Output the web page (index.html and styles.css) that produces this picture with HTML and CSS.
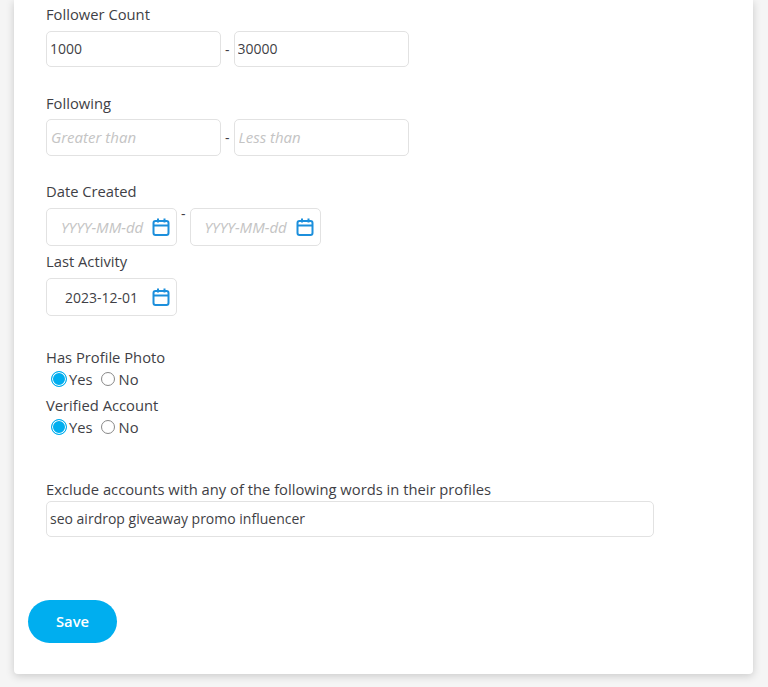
FILE: index.html

```html
<!DOCTYPE html>
<html>
<head>
    <title>Filters</title>
    <link rel="stylesheet" href="styles.css">
</head>
<body>
    <div class="card">
        <form class="filters">
            <div class="field field-follower">
                <label class="field-label">Follower Count</label>
                <div class="range">
                    <input type="text" class="text-input filled" value="1000">
                    <span class="dash">-</span>
                    <input type="text" class="text-input filled" value="30000">
                </div>
            </div>

            <div class="field field-following">
                <label class="field-label">Following</label>
                <div class="range">
                    <input type="text" class="text-input" placeholder="Greater than">
                    <span class="dash">-</span>
                    <input type="text" class="text-input" placeholder="Less than">
                </div>
            </div>

            <div class="field field-created">
                <label class="field-label">Date Created</label>
                <div class="range">
                    <div class="date-input">
                        <input type="text" placeholder="YYYY-MM-dd">
                        <svg class="cal-icon" viewBox="0 0 18 18"><rect x="1.5" y="3" width="15" height="14" rx="2"/><path d="M1.5 7.5h15M6 0.5v4M12.5 0.5v4"/></svg>
                    </div>
                    <span class="dash dash-top">-</span>
                    <div class="date-input">
                        <input type="text" placeholder="YYYY-MM-dd">
                        <svg class="cal-icon" viewBox="0 0 18 18"><rect x="1.5" y="3" width="15" height="14" rx="2"/><path d="M1.5 7.5h15M6 0.5v4M12.5 0.5v4"/></svg>
                    </div>
                </div>
            </div>

            <div class="field field-activity">
                <label class="field-label">Last Activity</label>
                <div class="date-input">
                    <input type="text" class="date-filled" value="2023-12-01">
                    <svg class="cal-icon" viewBox="0 0 18 18"><rect x="1.5" y="3" width="15" height="14" rx="2"/><path d="M1.5 7.5h15M6 0.5v4M12.5 0.5v4"/></svg>
                </div>
            </div>

            <div class="field field-photo">
                <label class="field-label">Has Profile Photo</label>
                <div class="radios">
                    <label class="radio"><input type="radio" name="photo" checked>Yes</label>
                    <label class="radio"><input type="radio" name="photo">No</label>
                </div>
            </div>

            <div class="field field-verified">
                <label class="field-label">Verified Account</label>
                <div class="radios">
                    <label class="radio"><input type="radio" name="verified" checked>Yes</label>
                    <label class="radio"><input type="radio" name="verified">No</label>
                </div>
            </div>

            <div class="field field-exclude">
                <label class="field-label">Exclude accounts with any of the following words in their profiles</label>
                <input type="text" class="text-input filled wide-input" value="seo airdrop giveaway promo influencer">
            </div>
        </form>

        <button type="button" class="save-button">Save</button>
    </div>
</body>
</html>
```

FILE: styles.css

```css
* {
    box-sizing: border-box;
}
body {
    margin: 0;
    padding: 0 15px 13px 14px;
    background-color: #f5f5f5;
    font-family: "Open Sans", sans-serif;
    font-size: 14px;
    color: #3f3f46;
}
.card {
    background-color: #fff;
    border-radius: 0 0 4px 4px;
    box-shadow: 0 2px 8px rgba(0, 0, 0, 0.18);
    padding: 5px 14px 31px;
}
.filters {
    padding-left: 18px;
}
.field-label {
    display: block;
    padding-bottom: 2px;
    font-size: 14.75px;
    line-height: 18px;
}
.range {
    display: flex;
    align-items: center;
}
.text-input {
    width: 175px;
    height: 36px;
    padding: 0 4px;
    background-color: #fff;
    border: 1px solid #e2e2e2;
    border-radius: 5px;
    font-family: inherit;
    font-size: 14px;
    color: #3f3f46;
    outline: none;
}
.text-input.filled {
    padding: 0 3px 2px;
}
input::placeholder {
    color: #c4c4c4;
    font-size: 15px;
    font-style: italic;
    opacity: 1;
}
.dash {
    width: 12.5px;
    text-align: center;
}
.dash-top {
    align-self: flex-start;
    line-height: 12px;
}
.date-input {
    display: flex;
    align-items: center;
    width: 131px;
    height: 38px;
    background-color: #fff;
    border: 1px solid #e2e2e2;
    border-radius: 5px;
}
.date-input input {
    flex: 1;
    min-width: 0;
    height: 100%;
    padding: 0 0 0 14px;
    border: none;
    background: none;
    font-family: inherit;
    font-size: 14px;
    color: #3f3f46;
    outline: none;
}
.date-input input.date-filled {
    padding-left: 18px;
}
.cal-icon {
    flex: none;
    width: 18px;
    height: 18px;
    margin-right: 6px;
    fill: none;
    stroke: #1c8fdc;
    stroke-width: 2;
}
.radios {
    display: flex;
    align-items: center;
    height: 22px;
    padding-left: 5px;
    font-size: 14.75px;
}
.radio {
    display: flex;
    align-items: center;
    margin-right: 8px;
}
.radio input {
    appearance: none;
    flex: none;
    width: 14px;
    height: 14px;
    margin: 0 4px 0 0;
    background-color: #fff;
    border: 1px solid #888;
    border-radius: 50%;
}
.radio input:checked {
    width: 16px;
    height: 16px;
    margin: 0 2px 0 0;
    background-color: #00aeef;
    border: 1px solid #00aeef;
    box-shadow: inset 0 0 0 1px #fff;
}
.field-follower .range {
    margin-top: 6px;
}
.field-following {
    margin-top: 27px;
}
.field-following .range {
    margin-top: 5px;
}
.field-following .text-input {
    height: 37px;
}
.field-created {
    margin-top: 26px;
}
.field-created .range {
    margin-top: 6px;
}
.field-activity {
    margin-top: 6px;
}
.field-activity .date-input {
    margin-top: 6px;
}
.field-photo {
    margin-top: 32px;
}
.field-verified {
    margin-top: 6px;
}
.field-exclude {
    margin-top: 42px;
}
.wide-input {
    display: block;
    width: 608px;
    margin-top: 1px;
}
.save-button {
    display: block;
    width: 89px;
    height: 43px;
    margin-top: 63px;
    padding-bottom: 3px;
    background-color: #00aeef;
    border: none;
    border-radius: 22px;
    font-family: inherit;
    font-size: 14.75px;
    font-weight: 600;
    color: #fff;
    cursor: pointer;
}
```
